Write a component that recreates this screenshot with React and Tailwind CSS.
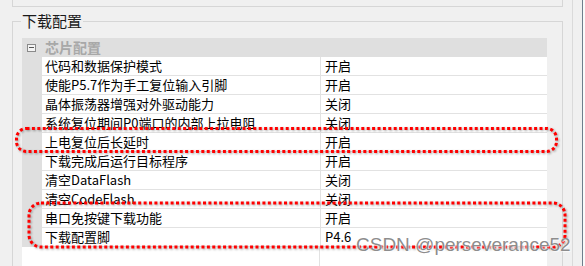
import React from "react";

const rows = [
  ["代码和数据保护模式", "开启"],
  ["使能P5.7作为手工复位输入引脚", "开启"],
  ["晶体振荡器增强对外驱动能力", "关闭"],
  ["系统复位期间P0端口的内部上拉电阻", "关闭"],
  ["上电复位后长延时", "开启"],
  ["下载完成后运行目标程序", "开启"],
  ["清空DataFlash", "关闭"],
  ["清空CodeFlash", "关闭"],
  ["串口免按键下载功能", "开启"],
  ["下载配置脚", "P4.6"],
];

export default function App() {
  return (
    <div
      className="relative w-[585px] h-[266px] overflow-hidden bg-[#f0f0f0] text-black"
      style={{ fontFamily: '"Noto Sans CJK SC", "Microsoft YaHei", sans-serif' }}
    >
      <div className="flex h-full">
        <div className="w-[572px] flex flex-col">
          <div className="ml-[12px] w-[551px] h-[7px] border-x border-b border-[#d6d6d6]" />
          <div className="relative ml-[12px] w-[551px] mt-[14px] flex-1 border-x border-t border-[#d6d6d6] pt-[16px] flex flex-col">
            <span className="absolute left-[8px] top-[-12px] px-[1px] bg-[#f0f0f0] text-[15px] leading-[22px] text-[#1a1a1a]">
              下载配置
            </span>
            <div className="ml-[9px] w-[525px] flex-1 flex flex-col">
              <div className="h-[19px] bg-[#dfdfdf] flex items-center">
                <div className="w-[20px] h-full flex items-center">
                  <div className="ml-[5px] w-[9px] h-[8px] border border-[#8a8a8a] relative bg-[#f4f4f4]">
                    <div className="absolute left-[1px] top-[2.5px] w-[5px] h-px bg-[#555]" />
                  </div>
                </div>
                <span className="pl-[3px] text-[14px] font-bold text-[#a8a8a8] leading-[19px]">芯片配置</span>
              </div>
              {rows.map(([label, value]) => (
                <div key={label} className="flex h-[19px]">
                  <div className="w-[20px] bg-[#dfdfdf]" />
                  <div className="w-[279px] bg-white border-b border-r border-[#e2e2e2] pl-[3px] text-[13px] leading-[18px] whitespace-nowrap overflow-hidden">
                    {label}
                  </div>
                  <div className="flex-1 bg-white border-b border-[#e2e2e2] pl-[4px] text-[13px] leading-[18px] whitespace-nowrap">
                    {value}
                  </div>
                </div>
              ))}
              <div className="flex-1 bg-white flex">
                <div className="w-[298px] border-r border-[#e2e2e2]" />
              </div>
            </div>
          </div>
        </div>
        <div className="w-px bg-[#dadada]" />
        <div className="w-[9px] bg-[#f0f0f0]" />
        <div className="w-px bg-[#6f7e8c]" />
        <div className="flex-1 bg-[#fafafa]" />
      </div>

      <svg
        className="absolute left-0 top-0 pointer-events-none"
        width="585"
        height="266"
        style={{ filter: "drop-shadow(1px 1.5px 1px rgba(0,0,0,0.35))" }}
      >
        <rect x="16.5" y="128.5" width="540" height="23" rx="10" fill="none" stroke="#ff0000" strokeWidth="3" strokeDasharray="3 2.4" />
        <rect x="29" y="203" width="536" height="44" rx="12" fill="none" stroke="#ff0000" strokeWidth="3" strokeDasharray="3 2.4" />
      </svg>

      <span
        className="absolute left-[356px] top-[235px] text-[19px] leading-[19px] whitespace-nowrap text-[rgba(110,110,110,0.8)]"
        style={{
          fontFamily: '"Liberation Sans", Arial, sans-serif',
          textShadow: "0 0 1px rgba(255,255,255,1), 1px 1px 1px rgba(255,255,255,0.7)",
        }}
      >
        CSDN @perseverance52
      </span>
    </div>
  );
}
